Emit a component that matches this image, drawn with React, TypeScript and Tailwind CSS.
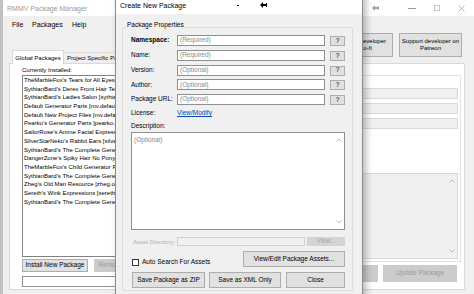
import * as React from "react"

const installed = [
  "TheMarbleFox's Tears for All Eyes [marblefox.tears]",
  "SythianBard's Derex Front Hair Test [sythianbard.derex]",
  "SythianBard's Ladies Salon [sythianbard.salon]",
  "Default Generator Parts [mv.default.generator]",
  "Default New Project Files [mv.default.project]",
  "Pearko's Generator Parts [pearko.generator]",
  "SailorRose's Anime Facial Expressions [sailorrose.faces]",
  "SilverStarNeko's Rabbit Ears [silverstarneko.ears]",
  "SythianBard's The Complete Generator [sythianbard.tcg]",
  "DangerZone's Spiky Hair No Ponytail [dangerzone.hair]",
  "TheMarbleFox's Child Generator Parts [marblefox.child]",
  "SythianBard's The Complete Generator 2 [sythianbard.tcg2]",
  "Zheg's Old Man Resource [zheg.oldman]",
  "Sereth's Wink Expressions [sereth.wink]",
  "SythianBard's The Complete Generator 3 [sythianbard.tcg3]",
]

const fields = [
  { label: "Namespace:", placeholder: "(Required)", bold: true },
  { label: "Name:", placeholder: "(Required)" },
  { label: "Version:", placeholder: "(Optional)" },
  { label: "Author:", placeholder: "(Optional)" },
  { label: "Package URL:", placeholder: "(Optional)" },
]

function PinGlyph({ className }: { className?: string }) {
  return (
    <svg width="7" height="6" viewBox="0 0 7 6" className={className}>
      <path d="M0 3 L3 0 L3 2 L6 2 L6 1 L7 1 L7 5 L6 5 L6 4 L3 4 L3 6 Z" fill="currentColor" />
    </svg>
  )
}

function Chevron({ up }: { up?: boolean }) {
  return (
    <svg width="6" height="4" viewBox="0 0 6 4">
      <polyline
        points={up ? "0.5,3.5 3,1 5.5,3.5" : "0.5,0.5 3,3 5.5,0.5"}
        fill="none"
        stroke="#a8a8a8"
        strokeWidth="0.8"
      />
    </svg>
  )
}

function WindowControls() {
  return (
    <div className="flex h-full">
      <div className="flex w-[25px] items-center justify-center">
        <div className="h-px w-[8px] bg-[#9a9a9a]" />
      </div>
      <div className="flex w-[25px] items-center justify-center">
        <div className="h-[6px] w-[6px] border border-[#c8c8c8]" />
      </div>
      <div className="flex w-[25px] items-center justify-center">
        <svg width="7" height="7" viewBox="0 0 7 7">
          <path d="M0.5 0.5 L6.5 6.5 M6.5 0.5 L0.5 6.5" stroke="#9a9a9a" strokeWidth="0.7" />
        </svg>
      </div>
    </div>
  )
}

function CreatePackageDialog() {
  return (
    <div className="absolute left-[115px] top-[-6px] flex h-[302px] w-[248px] flex-col border border-[#8c8c8c] bg-[#f0f0f0] shadow-[3px_2px_7px_rgba(0,0,0,0.28)]">
      <div className="flex h-[19px] shrink-0 items-center bg-white pl-[4px] pt-[2px] text-[7px]">
        <span className="w-[113px]">Create New Package</span>
        <span className="ml-[4px] h-[1.5px] w-[1.5px] rounded-full bg-black" />
        <PinGlyph className="ml-[21px] -mt-[2px] text-black" />
      </div>

      <div className="flex flex-1 flex-col pl-[6px] pt-[13px]">
        <div className="relative flex h-[264px] w-[231px] flex-col rounded-[2px] border border-[#dcdcdc] pl-[8px] pr-[7px] pt-[7px]">
          <span className="absolute left-[3px] top-[-7px] bg-[#f0f0f0] px-[1px] leading-[8px]">Package Properties</span>

          <div className="flex flex-col gap-[3.75px]">
            {fields.map((f) => (
              <div key={f.label} className="flex h-[11px] items-end">
                <span className={`flex h-[11px] w-[46px] items-center whitespace-nowrap ${f.bold ? "font-bold" : ""}`}>
                  {f.label}
                </span>
                <div className="flex h-[11px] w-[148px] items-center border border-[#8f8f8f] bg-white pl-[2px] text-[#8a8a8a]">
                  {f.placeholder}
                </div>
                <button className="ml-[5px] flex h-[10px] w-[15px] items-center justify-center border border-[#adadad] bg-[#e1e1e1]">
                  ?
                </button>
              </div>
            ))}
          </div>

          <div className="mt-[3px] flex h-[11px] items-center">
            <span className="w-[46px]">License:</span>
            <span className="text-[#0645ad] underline">View/Modify</span>
          </div>

          <div className="mt-[3px] flex h-[9px] items-center">Description:</div>

          <div className="mt-[1px] flex h-[98px] w-[214px] border border-[#8f8f8f] bg-white">
            <span className="flex-1 pl-[2px] pt-[4px] text-[#8a8a8a]">(Optional)</span>
            <div className="flex w-[11px] flex-col items-center justify-between py-[5px]">
              <Chevron up />
              <Chevron />
            </div>
          </div>

          <div className="mt-[7px] flex h-[9px] items-center">
            <span className="w-[46px] whitespace-nowrap pl-[2px] text-[6px] text-[#b0b0b0]">Asset Directory:</span>
            <div className="h-[9px] w-[128px] border border-[#d0d0d0] bg-[#f0f0f0]" />
            <button className="ml-[2px] h-[9px] w-[38px] bg-[#d4d4d4] text-[#a8a8a8]">View...</button>
          </div>

          <div className="mt-[5px] flex h-[16px] items-end">
            <div className="mb-[1px] ml-[1px] flex items-center">
              <div className="h-[7px] w-[7px] border border-[#333] bg-white" />
              <span className="ml-[3px]">Auto Search For Assets</span>
            </div>
            <button className="ml-auto h-[16px] w-[102px] border border-[#adadad] bg-[#e1e1e1]">
              View/Edit Package Assets...
            </button>
          </div>

          <div className="mt-[5px] flex h-[16px] pl-[1px]">
            <button className="w-[73px] border border-[#adadad] bg-[#e1e1e1]">Save Package as ZIP</button>
            <button className="ml-[4px] w-[72px] border border-[#adadad] bg-[#e1e1e1]">Save as XML Only</button>
            <button className="ml-[5px] w-[59px] border border-[#adadad] bg-[#e1e1e1]">Close</button>
          </div>
        </div>
      </div>
    </div>
  )
}

export default function App() {
  return (
    <div className="relative h-[294px] w-[474px] overflow-hidden bg-[#f0f0f0] font-['Liberation_Sans',Arial,sans-serif] text-[6.5px] leading-none text-black">
      <div className="flex h-full">
        <div className="w-[3px] shrink-0 bg-[#c2c2c2]" />

        <div className="flex min-w-0 flex-1 flex-col">
          {/* Title bar */}
          <div className="flex h-[16px] shrink-0 items-center bg-white pl-[4px]">
            <span className="text-[7px] text-[#9b9b9b]">RMMV Package Manager</span>
            <PinGlyph className="ml-auto mr-[20px] text-[#a0a0a0]" />
            <WindowControls />
          </div>

          {/* Menu bar */}
          <div className="flex h-[16px] shrink-0 items-center pl-[9px] text-[7px]">
            <span className="w-[20px]">File</span>
            <span className="w-[40px]">Packages</span>
            <span>Help</span>
          </div>

          <div className="flex flex-1 flex-col pl-[6px] pr-[9px]">
            {/* Tabs + support buttons */}
            <div className="flex h-[31px] shrink-0 justify-between">
              <div className="flex items-end pl-[3px] text-[6px]">
                <div className="relative z-10 -mb-px flex h-[14px] w-[52px] items-center justify-center whitespace-nowrap border border-b-0 border-[#d9d9d9] bg-white">
                  Global Packages
                </div>
                <div className="flex h-[11px] items-center whitespace-nowrap border border-b-0 border-l-0 border-[#d9d9d9] bg-[#f0f0f0] px-[3px]">
                  Project Specific Packages
                </div>
              </div>
              <div className="flex gap-[6px] pr-[3px] pt-[1px] text-[6px]">
                <button className="h-[24px] w-[63px] whitespace-nowrap border border-[#adadad] bg-[#e1e1e1] leading-[7.5px]">
                  Support developer
                  <br />
                  on Ko-fi
                </button>
                <button className="h-[24px] w-[63px] whitespace-nowrap border border-[#adadad] bg-[#e1e1e1] leading-[7.5px]">
                  Support developer on
                  <br />
                  Patreon
                </button>
              </div>
            </div>

            {/* Tab page */}
            <div className="flex flex-1 border border-[#d9d9d9] bg-white">
              <div className="flex w-[182px] flex-col pl-[12px] pt-[3px]">
                <span className="h-[6px] text-[6px] leading-[6px]">Currently Installed:</span>
                <div className="mt-[2px] h-[182px] overflow-hidden border border-[#828282] bg-white pl-[1px] text-[6px]">
                  {installed.map((p) => (
                    <div key={p} className="h-[8.7px] whitespace-nowrap leading-[8.7px]">
                      {p}
                    </div>
                  ))}
                </div>
                <div className="mt-[2px] flex h-[13px] gap-[6px]">
                  <button className="w-[66px] whitespace-nowrap border border-[#adadad] bg-[#e1e1e1]">Install New Package</button>
                  <button className="w-[60px] whitespace-nowrap bg-[#cccccc] text-[#9a9a9a]">Remove Package</button>
                </div>
                <div className="mt-[4px] h-[11px] border border-[#8f8f8f] bg-white" />
              </div>

              <div className="ml-[8px] flex flex-1 flex-col pr-[3px] pt-[11px]">
                <div className="flex h-[187px] flex-col border border-[#e3e3e3] pl-[6px] pr-[2px] pt-[12px]">
                  <div className="flex flex-col gap-[4px]">
                    <div className="h-[11px] border border-[#d9d9d9] bg-[#f0f0f0]" />
                    <div className="h-[11px] border border-[#d9d9d9] bg-[#f0f0f0]" />
                    <div className="h-[11px] border border-[#d9d9d9] bg-[#f0f0f0]" />
                  </div>
                  <div className="mt-[44px] flex h-[86px] justify-end border border-[#d9d9d9] bg-[#f0f0f0]">
                    <div className="flex w-[11px] flex-col items-center justify-between py-[5px]">
                      <Chevron up />
                      <Chevron />
                    </div>
                  </div>
                </div>
                <div className="mt-[3px] flex h-[17px] justify-end gap-[5px] pr-[4px]">
                  <button className="w-[74px] bg-[#cccccc] text-[#9a9a9a]">Uninstall</button>
                  <button className="w-[74px] bg-[#cccccc] text-[#9a9a9a]">Update Package</button>
                </div>
              </div>
            </div>

            <div className="h-[4px] shrink-0" />
          </div>
        </div>
      </div>

      <CreatePackageDialog />
    </div>
  )
}
